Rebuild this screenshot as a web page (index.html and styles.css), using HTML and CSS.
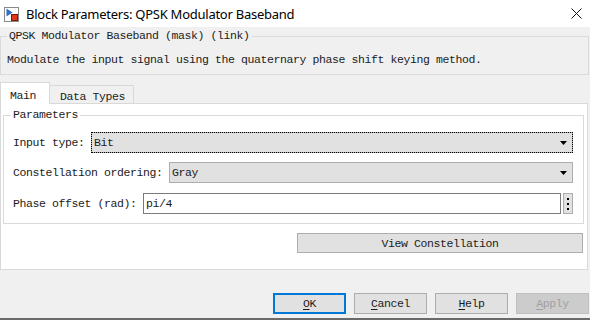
FILE: index.html
```html
<!DOCTYPE html>
<html>
<head>
    <meta charset="UTF-8">
    <title>Block Parameters: QPSK Modulator Baseband</title>
    <link rel="stylesheet" href="styles.css">
</head>
<body>
    <div class="titlebar">
        <svg class="app-icon" width="15" height="15" viewBox="0 0 15 15">
            <rect x="0.5" y="0.5" width="14" height="14" fill="#fff" stroke="#8a8a8a"/>
            <polygon points="2.5,1.5 2.5,9.5 8.5,5.5" fill="#2f6fc4"/>
            <rect x="7.5" y="7.5" width="6" height="6" fill="#e2361c" stroke="#7a1a0c"/>
        </svg>
        <span class="title">Block Parameters: QPSK Modulator Baseband</span>
        <svg class="close" width="11" height="11" viewBox="0 0 11 11">
            <path d="M0.5 0.5 L10.5 10.5 M10.5 0.5 L0.5 10.5" stroke="#111" stroke-width="1"/>
        </svg>
    </div>

    <div class="dialog">
        <fieldset class="mask">
            <legend>QPSK Modulator Baseband (mask) (link)</legend>
            <div class="desc">Modulate the input signal using the quaternary phase shift keying method.</div>
        </fieldset>

        <div class="tabs">
            <div class="tab active">Main</div>
            <div class="tab">Data Types</div>
        </div>

        <div class="panel">
            <fieldset class="params">
                <legend>Parameters</legend>
                <div class="row">
                    <span class="label">Input type: </span>
                    <div class="select focus">
                        <span>Bit</span>
                        <svg class="arrow" width="7" height="4" viewBox="0 0 7 4"><polygon points="0,0 7,0 3.5,4" fill="#000"/></svg>
                    </div>
                </div>
                <div class="row">
                    <span class="label">Constellation ordering: </span>
                    <div class="select">
                        <span>Gray</span>
                        <svg class="arrow" width="7" height="4" viewBox="0 0 7 4"><polygon points="0,0 7,0 3.5,4" fill="#000"/></svg>
                    </div>
                </div>
                <div class="row row-last">
                    <span class="label">Phase offset (rad): </span>
                    <div class="edit">pi/4</div>
                    <div class="more">
                        <svg width="2" height="12" viewBox="0 0 2 12">
                            <rect x="0" y="0" width="2" height="2" fill="#000"/>
                            <rect x="0" y="5" width="2" height="2" fill="#000"/>
                            <rect x="0" y="10" width="2" height="2" fill="#000"/>
                        </svg>
                    </div>
                </div>
            </fieldset>
            <div class="btn wide">View Constellation</div>
        </div>

        <div class="buttons">
            <div class="btn default"><u>O</u>K</div>
            <div class="btn"><u>C</u>ancel</div>
            <div class="btn"><u>H</u>elp</div>
            <div class="btn disabled"><u>A</u>pply</div>
        </div>
    </div>
</body>
</html>
```

FILE: styles.css
```css
html, body {
    margin: 0;
    padding: 0;
}
body {
    width: 590px;
    height: 320px;
    overflow: hidden;
    background: #fff;
    font-family: 'Liberation Mono', monospace;
    font-size: 11.5px;
    letter-spacing: -0.4px;
    color: #1c1c1c;
}
.titlebar {
    height: 27px;
    display: flex;
    align-items: center;
    background: #fff;
}
.app-icon {
    margin-left: 4px;
    margin-top: 1px;
}
.title {
    margin-left: 7px;
    font-family: 'Noto Sans', sans-serif;
    font-size: 13px;
    letter-spacing: -0.25px;
    color: #000;
}
.close {
    margin-left: auto;
    margin-right: 8px;
    margin-top: -1px;
}
.dialog {
    height: 293px;
    box-sizing: border-box;
    background: #f0f0f0;
    border-bottom: 2px solid #6a6a6a;
    display: flex;
    flex-direction: column;
}
fieldset {
    border: 1px solid #dadada;
    margin: 0;
    min-width: 0;
}
legend {
    padding: 0 2px;
    line-height: 14px;
}
.mask {
    margin: 2px 1px 0 0;
    padding: 0 6px 7px 6px;
}
.desc {
    margin-top: 10px;
    line-height: 14px;
    white-space: nowrap;
}
.tabs {
    display: flex;
    align-items: flex-end;
    margin-top: 7px;
    margin-bottom: -1px;
}
.tab {
    box-sizing: border-box;
    height: 19px;
    width: 85px;
    padding: 4px 0 0 10px;
    line-height: 14px;
    border: 1px solid #d9d9d9;
    border-bottom: none;
    background: #f0f0f0;
}
.tab.active {
    position: relative;
    z-index: 1;
    width: 50px;
    height: 22px;
    padding: 6px 0 0 9px;
    background: #fff;
    margin-right: -1px;
}
.panel {
    background: #fff;
    border: 1px solid #d9d9d9;
    margin-right: 2px;
    display: flex;
    flex-direction: column;
}
.params {
    margin: 4px 3px 0 2px;
    padding: 0 10px 9px 9px;
}
.params legend {
    margin-left: -2px;
}
.row {
    display: flex;
    align-items: center;
    height: 21px;
    margin-top: 9px;
}
.row:first-of-type {
    margin-top: 10px;
}
.row-last {
    margin-top: 10px;
}
.label {
    white-space: pre;
}
.select {
    flex: 1;
    box-sizing: border-box;
    height: 21px;
    display: flex;
    align-items: center;
    padding: 0 5px 0 2px;
    background: #e1e1e1;
    border: 1px solid #adadad;
}
.select.focus {
    outline: 1px dotted #000;
    outline-offset: -1px;
}
.arrow {
    margin-left: auto;
}
.edit {
    flex: 1;
    box-sizing: border-box;
    height: 21px;
    line-height: 19px;
    padding-left: 2px;
    background: #fff;
    border: 1px solid #7a7a7a;
    margin-right: 2px;
}
.more {
    box-sizing: border-box;
    width: 10px;
    height: 21px;
    display: flex;
    align-items: center;
    justify-content: center;
    background: #e1e1e1;
    border: 1px solid #adadad;
}
.btn {
    box-sizing: border-box;
    height: 21px;
    display: flex;
    align-items: center;
    justify-content: center;
    background: #e1e1e1;
    border: 1px solid #adadad;
}
.btn u {
    text-underline-offset: 2px;
}
.wide {
    width: 286px;
    height: 20px;
    align-self: flex-end;
    margin: 9px 4px 16px 0;
}
.buttons {
    display: flex;
    justify-content: flex-end;
    gap: 8px;
    margin: 23px 1px 0 0;
}
.buttons .btn {
    width: 73px;
}
.btn.default {
    border: 2px solid #0078d7;
}
.btn.disabled {
    background: #cccccc;
    border-color: #bfbfbf;
    color: #a0a0a0;
}
```
